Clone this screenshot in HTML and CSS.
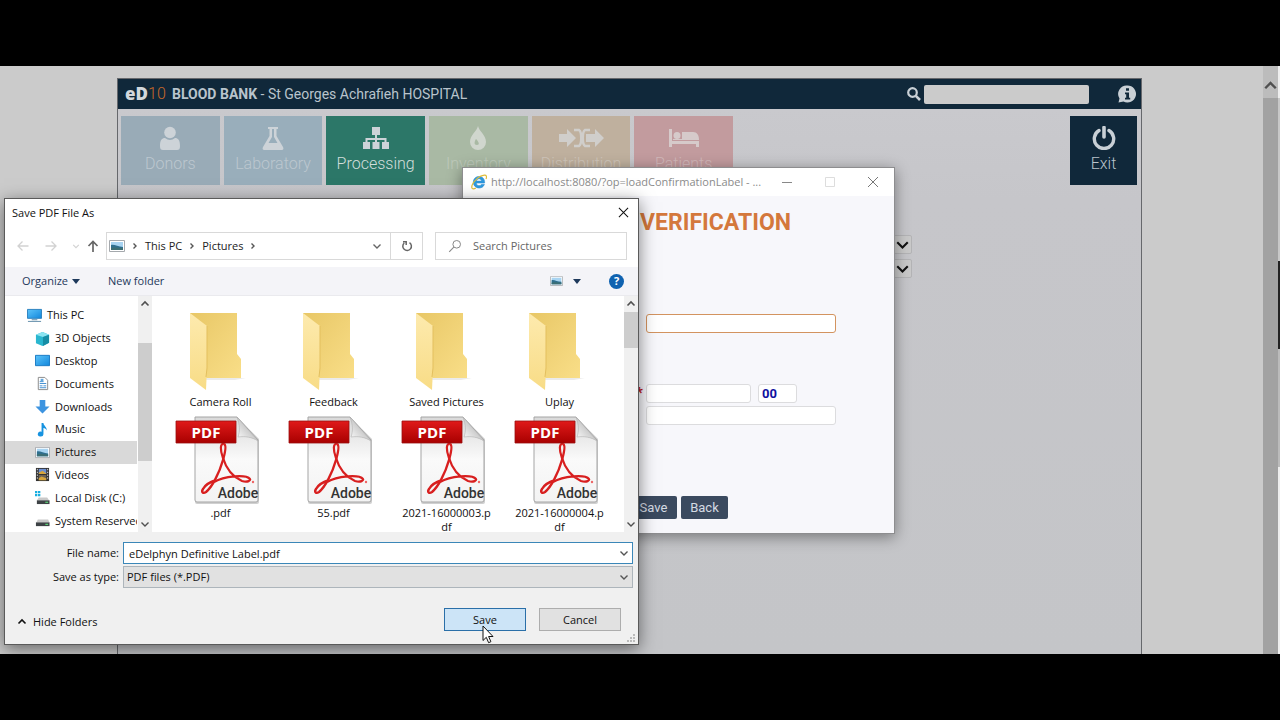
FILE: index.html
```html
<!DOCTYPE html>
<html lang="en">
<head>
<meta charset="utf-8">
<title>Blood Bank</title>
<link rel="stylesheet" href="styles.css">
</head>
<body>
<svg class="defs" aria-hidden="true">
  <defs>
    <linearGradient id="gBack" x1="0" y1="0" x2="1" y2="1"><stop offset="0" stop-color="#e8c766"/><stop offset="1" stop-color="#f9de88"/></linearGradient>
    <linearGradient id="gFlap" x1="0" y1="0" x2="0" y2="1"><stop offset="0" stop-color="#fdeaae"/><stop offset="1" stop-color="#f8dc86"/></linearGradient>
    <linearGradient id="gRed" x1="0" y1="0" x2="0" y2="1"><stop offset="0" stop-color="#e01a1a"/><stop offset="1" stop-color="#a80000"/></linearGradient>
    <linearGradient id="gPaper" x1="0" y1="0" x2="0" y2="1"><stop offset="0" stop-color="#d9d9d9"/><stop offset=".5" stop-color="#fafafa"/><stop offset="1" stop-color="#f3f3f3"/></linearGradient>
    <linearGradient id="gScreen" x1="0" y1="0" x2="1" y2="1"><stop offset="0" stop-color="#5cc4fa"/><stop offset="1" stop-color="#1287dc"/></linearGradient>
    <linearGradient id="gCurl" x1="0" y1="1" x2="1" y2="0"><stop offset="0" stop-color="#fff"/><stop offset="1" stop-color="#9a9a9a"/></linearGradient>
  </defs>
  <symbol id="folder" viewBox="0 0 60 80">
    <path d="M17 66h42l-11 2H17z" fill="#000" opacity=".08"/>
    <path d="M3 1h47v41l4 5v19H3z" fill="url(#gBack)"/>
    <path d="M3 1l17 13v42l-1 22L3 66z" fill="url(#gFlap)"/>
    <path d="M20 14v42l-1 9" fill="none" stroke="#e3bf5e"/>
  </symbol>
  <symbol id="pdf" viewBox="0 0 86 90">
    <path d="M20 2h43l21 21v63a2 2 0 0 1-2 2H22a2 2 0 0 1-2-2z" fill="#777" opacity=".35"/>
    <path d="M20 1h42l21 23v60a2 2 0 0 1-2 2H22a2 2 0 0 1-2-2z" fill="url(#gPaper)" stroke="#a5a5a5"/>
    <path d="M62 1c3 8 3 14 1 20 7-1 14 0 20 4z" fill="url(#gCurl)" stroke="#b0b0b0" stroke-width=".6"/>
    <path d="M49 28c-4-1-4 6-1 14 3 10 10 19 19 23 6 2 9-1 8-2-4-5-26-3-36 3" fill="none" stroke="#d81f1f" stroke-width="2.200"/>
    <path d="M49 28c3 1 1 9-1 16-4 14-11 27-17 32-3 2-5 0-3-3 2-4 7-7 13-9" fill="none" stroke="#d81f1f" stroke-width="2.400"/>
    <circle cx="78" cy="66" r="1.200" fill="#e66"/>
    <path d="M1 5h60v22H1z" fill="url(#gRed)" stroke="#9b0f0f" stroke-width=".8"/>
    <text x="31" y="22" text-anchor="middle" class="pdf-tag">PDF</text>
    <text x="63" y="82" text-anchor="middle" class="pdf-brand">Adobe</text>
  </symbol>
  <symbol id="picture" viewBox="0 0 16 12">
    <path d="M.5.5h15v11H.5z" fill="#fff" stroke="#a5a9ad"/>
    <path d="M2 2h12v8H2z" fill="#a8d4f2"/>
    <path d="M2 5c3-1 7 2 12 2v3H2z" fill="#2f6f8e"/>
    <path d="M2 8c4-1 7 0 12 0v2H2z" fill="#3c6e74"/>
  </symbol>
  <symbol id="up" viewBox="0 0 10 10"><path d="M1.500 6.500L5 3l3.500 3.500" fill="none" stroke="currentColor" stroke-width="1.600"/></symbol>
  <symbol id="down" viewBox="0 0 10 10"><path d="M1.500 3.500L5 7l3.500-3.500" fill="none" stroke="currentColor" stroke-width="1.400"/></symbol>
  <symbol id="right" viewBox="0 0 10 10"><path d="M3.500 2.500L6 5 3.500 7.500" fill="none" stroke="currentColor" stroke-width="1.400"/></symbol>
  <symbol id="drive" viewBox="0 0 16 14"><path d="M3 6h11l1.500 3H1.500z" fill="#c9c9c9"/><path d="M1 9h14.500v4H1z" fill="#3d4245"/><path d="M11 10.500h3v1.200h-3z" fill="#5edc7a"/></symbol>
</svg>

<main class="stage">
  <div class="page">
    <div class="app">
      <header class="topbar">
        <span class="logo"><b>eD</b><i>10</i></span>
        <h1 class="title"><b>BLOOD BANK</b> - St Georges Achrafieh HOSPITAL</h1>
        <svg class="ic14" viewBox="0 0 14 14"><circle cx="5.500" cy="5.500" r="4.300" fill="none" stroke="#c9d0d6" stroke-width="2.200"/><path d="M8.800 8.800L13 13" stroke="#c9d0d6" stroke-width="2.600"/></svg>
        <input class="quick" type="text" aria-label="Search">
        <button class="info" aria-label="Information"><svg viewBox="0 0 18 18"><path d="M9.500.5a8.500 8.500 0 1 1-4 16L.5 17.500l1-4A8.500 8.500 0 0 1 9.500.5z" fill="#c9d0d6"/><path d="M8 3.200h3v2.600H8zM7 7.500h4v5.300h1.200v1.700H7v-1.700h1.200V9.200H7z" fill="#10283a"/></svg></button>
      </header>
      <div class="menu">
        <nav class="tiles">
          <a class="tile donors" href="#"><svg viewBox="0 0 32 24"><circle cx="16" cy="6.500" r="5.800"/><path d="M6 20c0-6 2-8 5-8a8 8 0 0 0 10 0c3 0 5 2 5 8 0 3-1 4-3 4H9c-2 0-3-1-3-4z"/></svg>Donors</a>
          <a class="tile lab" href="#"><svg viewBox="0 0 32 24"><path fill-rule="evenodd" d="M11 1h10v2h-1.500v7L26 21c1 2 0 3-1 3H7c-1 0-2-1-1-3l6.500-11V3H11zm4 2v8l-3.500 6h9L17 11V3z"/></svg>Laboratory</a>
          <a class="tile processing" href="#"><svg viewBox="0 0 32 24"><path d="M12 1h8v8h-3v3h9.500v4H29v7h-7v-7h2.500v-2H17v2h2.500v7h-7v-7H15v-2H7.500v2H10v7H3v-7h2.500v-4H15V9h-3z"/></svg>Processing</a>
          <a class="tile inventory" href="#"><svg viewBox="0 0 32 24"><path fill-rule="evenodd" d="M16 0c1 5 8 9 8 16a8 8 0 0 1-16 0c0-7 7-11 8-16zm-2 13c-2 3-2 6 1 6s2-3-1-6z"/></svg>Inventory</a>
          <a class="tile distribution" href="#"><svg class="wide" viewBox="0 0 46 24"><path d="M1 8h8V3l9 9-9 9v-5H1zM28 8h9V3l9 9-9 9v-5h-9z"/><path d="M16 4h5c3 2 3 14 0 16h-5M32 4h-5c-3 2-3 14 0 16h5" fill="none" stroke="#d0cecb" stroke-width="2.500"/></svg>Distribution</a>
          <a class="tile patients" href="#"><svg viewBox="0 0 32 24"><path d="M1 3h3v12h27v6h-3v-3H4v3H1z"/><circle cx="9" cy="9.500" r="3.500"/><path d="M14 6h11c4 0 6 3 6 8H5v-1h9z"/></svg>Patients</a>
        </nav>
        <a class="tile exit" href="#"><svg viewBox="0 0 32 24"><path d="M11 4.500a9.700 9.700 0 1 0 10 0" fill="none" stroke="#c9d0d6" stroke-width="3.400" stroke-linecap="round"/><path d="M16 1.500v9.500" stroke="#c9d0d6" stroke-width="3.600" stroke-linecap="round"/></svg>Exit</a>
      </div>
      <div class="filters">
        <label class="filter"><select aria-label="Filter one"><option></option></select><svg viewBox="0 0 10 10"><use href="#down"/></svg></label>
        <label class="filter"><select aria-label="Filter two"><option></option></select><svg viewBox="0 0 10 10"><use href="#down"/></svg></label>
      </div>
    </div>
  </div>
  <div class="page-scroll"><svg viewBox="0 0 10 10"><use href="#up"/></svg><div class="thumb"></div></div>
  <div class="edge"><i class="e1"></i><i class="e2"></i><i class="e3"></i><i class="e4"></i></div>

  <section class="popup">
    <header class="popup-bar">
      <svg class="ie" viewBox="0 0 16 16"><path d="M8 2.500c-3.500 0-5.700 2.600-5.700 5.700S4.600 14 8 14c2.600 0 4.600-1.400 5.400-3.600h-3c-.5.900-1.300 1.300-2.400 1.300-1.600 0-2.600-1-2.700-2.700h8.300c.2-4-2-6.500-5.600-6.500zM5.400 7.100C5.600 5.700 6.600 4.800 8 4.800s2.400.9 2.500 2.300z" fill="#2d9be0" stroke="#2d8bd0" stroke-width=".6"/><path d="M15 5c1-2 .6-4-1.600-3.800C8 1.600.3 9 .8 13.500c.3 2 2.500 1.500 4 .5" fill="none" stroke="#e0bd3a" stroke-width="1.200"/></svg>
      <span class="popup-title">http://localhost:8080/?op=loadConfirmationLabel - ...</span>
      <button aria-label="Minimize"><svg viewBox="0 0 12 12"><path d="M1 6.500h10" stroke="#888"/></svg></button>
      <button aria-label="Maximize"><svg viewBox="0 0 12 12"><path d="M1.500 1.500h9v9h-9z" fill="none" stroke="#ddd"/></svg></button>
      <button aria-label="Close"><svg viewBox="0 0 12 12"><path d="M1 1l10 10M11 1L1 11" stroke="#777"/></svg></button>
    </header>
    <form class="popup-body">
      <h2>VERIFICATION</h2>
      <input class="f long focus" type="text" aria-label="Code">
      <div class="frow"><span class="req">*</span><input class="f num" type="text" aria-label="Number"><input class="f chk" type="text" value="00" aria-label="Check"></div>
      <input class="f long" type="text" aria-label="Product">
      <div class="acts"><button type="button">Save</button><button type="button">Back</button></div>
    </form>
  </section>

  <section class="dialog">
    <header class="dlg-bar"><h2>Save PDF File As</h2><button aria-label="Close"><svg viewBox="0 0 12 12"><path d="M1 1l10 10M11 1L1 11" stroke="#111" stroke-width="1.100"/></svg></button></header>
    <div class="nav">
      <button aria-label="Back" class="dim"><svg viewBox="0 0 14 14"><path d="M12.500 7H2M6.500 2.500L2 7l4.500 4.500" fill="none" stroke="currentColor" stroke-width="1.300"/></svg></button>
      <button aria-label="Forward" class="dim"><svg viewBox="0 0 14 14"><path d="M1.500 7H12M7.500 2.500L12 7l-4.500 4.500" fill="none" stroke="currentColor" stroke-width="1.300"/></svg></button>
      <button aria-label="Recent" class="dim small"><svg viewBox="0 0 10 10"><use href="#down"/></svg></button>
      <button aria-label="Up" class="upb"><svg viewBox="0 0 14 14"><path d="M7 13V2.500M2.500 7L7 2.500 11.500 7" fill="none" stroke="currentColor" stroke-width="1.700"/></svg></button>
      <div class="path">
        <svg class="pic"><use href="#picture"/></svg>
        <svg class="chev"><use href="#right"/></svg><span>This PC</span>
        <svg class="chev"><use href="#right"/></svg><span>Pictures</span>
        <svg class="chev"><use href="#right"/></svg>
        <svg class="chev drop" viewBox="0 0 10 10"><use href="#down"/></svg>
      </div>
      <button class="refresh" aria-label="Refresh"><svg viewBox="0 0 12 12"><path d="M8.500 2.600A4.300 4.300 0 1 1 3.200 3M2 1.800h3.200V5" fill="none" stroke="#666" stroke-width="1.500"/></svg></button>
      <label class="search"><svg viewBox="0 0 14 14"><circle cx="8.700" cy="5.300" r="3.800" fill="none" stroke="#888"/><path d="M5.800 8.200L1.200 12.800" stroke="#888" stroke-width="1.100"/></svg><input type="text" placeholder="Search Pictures" aria-label="Search Pictures"></label>
    </div>
    <div class="tools">
      <button>Organize <svg class="tri" viewBox="0 0 8 5"><path d="M0 0h8L4 5z" fill="#1e395b"/></svg></button>
      <button class="newf">New folder</button>
      <span class="grow"></span>
      <button aria-label="View"><svg class="view" viewBox="0 0 16 12"><use href="#picture"/></svg></button>
      <button aria-label="View options" class="vopt"><svg class="tri" viewBox="0 0 8 5"><path d="M0 0h8L4 5z" fill="#1e395b"/></svg></button>
      <button class="help" aria-label="Help">?</button>
    </div>
    <div class="panes">
      <ul class="tree">
        <li class="root"><svg viewBox="0 0 16 14"><path d="M.5.500h15v9.500H.5z" fill="url(#gScreen)" stroke="#2a7fbd"/><path d="M5 11.500h6M1 13.300h14" stroke="#5d8aa8"/></svg>This PC</li>
        <li><svg viewBox="0 0 16 16"><path d="M1 4l7-3 7 3v8.500L8 16l-7-3z" fill="#29b6cf"/><path d="M1 4l7-3 7 3-6.500 2.500z" fill="#8be4f1"/><path d="M8.500 6.500L15 4v8.500L8.500 16z" fill="#168da5"/></svg>3D Objects</li>
        <li><svg viewBox="0 0 16 14"><path d="M.5 1.500h15v11H.5z" fill="url(#gScreen)" stroke="#1578c2"/></svg>Desktop</li>
        <li><svg viewBox="0 0 16 16"><path d="M3.500 1.500h7l3 3v10h-10z" fill="#fff" stroke="#888"/><path d="M5 6h4M5 8h7M5 10.500h3M9 10.500h3M5 12.500h7" stroke="#3d8cd0"/><path d="M6 3h3v3H6z" fill="#63a7de"/></svg>Documents</li>
        <li><svg viewBox="0 0 16 16"><path d="M5 1h6v7h4.500L8 15.500.5 8H5z" fill="#3d94e0"/></svg>Downloads</li>
        <li><svg viewBox="0 0 16 16"><path d="M7 1h2c0 3 4 4 3.500 8-.5-1.500-2-2.500-3.500-2.500V13a3 2.600 0 1 1-2-2.500z" fill="#1793e0"/></svg>Music</li>
        <li class="sel"><svg viewBox="0 0 16 12"><use href="#picture"/></svg>Pictures</li>
        <li><svg viewBox="0 0 16 16"><path d="M1 1h14v14H1z" fill="#333"/><path d="M4 2h8v5.500H4z" fill="#6c8fd0"/><path d="M4 8.500h8V14H4z" fill="#6d6352"/><path d="M4 6l4-2 4 3v.5H4zM4 12l3-2 5 2v2H4z" fill="#d6a43b"/><path d="M2.500 2v12M13.500 2v12" stroke="#ddd" stroke-dasharray="1.500 1.500"/></svg>Videos</li>
        <li><svg viewBox="0 0 16 16"><path d="M0 1h2.500v2.500H0zM3.200 1h2.500v2.500H3.200zM0 4.200h2.500v2.500H0zM3.200 4.200h2.500v2.500H3.200z" fill="#18aee0"/><path d="M4 8h9l2 3H2z" fill="#c9c9c9"/><path d="M2 11h13.500v4H2z" fill="#3d4245"/><path d="M11 12.500h3v1.200h-3z" fill="#5edc7a"/></svg>Local Disk (C:)</li>
        <li><svg viewBox="0 0 16 14"><use href="#drive"/></svg>System Reserved</li>
      </ul>
      <div class="bar tree-bar"><svg viewBox="0 0 10 10"><use href="#up"/></svg><i></i><svg viewBox="0 0 10 10"><use href="#down"/></svg></div>
      <div class="files">
        <figure><svg class="fo"><use href="#folder"/></svg><figcaption>Camera Roll</figcaption></figure>
        <figure><svg class="fo"><use href="#folder"/></svg><figcaption>Feedback</figcaption></figure>
        <figure><svg class="fo"><use href="#folder"/></svg><figcaption>Saved Pictures</figcaption></figure>
        <figure><svg class="fo"><use href="#folder"/></svg><figcaption>Uplay</figcaption></figure>
        <figure><svg class="pf"><use href="#pdf"/></svg><figcaption>.pdf</figcaption></figure>
        <figure><svg class="pf"><use href="#pdf"/></svg><figcaption>55.pdf</figcaption></figure>
        <figure><svg class="pf"><use href="#pdf"/></svg><figcaption>2021-16000003.p<br>df</figcaption></figure>
        <figure><svg class="pf"><use href="#pdf"/></svg><figcaption>2021-16000004.p<br>df</figcaption></figure>
      </div>
      <div class="bar file-bar"><svg viewBox="0 0 10 10"><use href="#up"/></svg><i></i><svg viewBox="0 0 10 10"><use href="#down"/></svg></div>
    </div>
    <form class="foot">
      <div class="fields">
        <label for="fname">File name:</label>
        <div class="combo"><input id="fname" type="text" value="eDelphyn Definitive Label.pdf"><svg viewBox="0 0 10 10"><use href="#down"/></svg></div>
        <label for="ftype">Save as type:</label>
        <div class="combo"><select id="ftype"><option>PDF files (*.PDF)</option></select><svg viewBox="0 0 10 10"><use href="#down"/></svg></div>
      </div>
      <div class="actions">
        <button type="button" class="hide"><svg viewBox="0 0 10 10"><use href="#up"/></svg>Hide Folders</button>
        <span class="grow"></span>
        <button type="button" class="btn primary">Save</button>
        <button type="button" class="btn">Cancel</button>
      </div>
    </form>
    <svg class="grip" viewBox="0 0 9 9"><path d="M6 0h2v2H6zM3 3h2v2H3zM6 3h2v2H6zM0 6h2v2H0zM3 6h2v2H3zM6 6h2v2H6z" fill="#bbb"/></svg>
  </section>

  <svg class="cursor" viewBox="0 0 12 19"><path d="M1 1v14.500l3.300-3.200 2.300 5.400 2.300-1-2.300-5.200H11z" fill="#fff" stroke="#111"/></svg>
</main>
</body>
</html>
```
FILE: styles.css
```css
* { box-sizing: border-box; }
html, body { height: 100%; margin: 0; }
body {
  background: #000;
  padding: 66px 0;
  font-family: "Open Sans", "Noto Sans", sans-serif;
  font-size: 11px;
  line-height: 14px;
  color: #111;
}
button, input, select { font: inherit; color: inherit; margin: 0; }
button { border: 0; padding: 0; background: none; }
h1, h2, ul, figure { margin: 0; padding: 0; }
svg { display: block; flex: none; }
.defs { position: absolute; width: 0; height: 0; }
.grow { flex: 1; }

.stage { position: relative; height: 100%; overflow: hidden; display: flex; background: #cbcbcb; }
.page { flex: 1; padding: 12px 121px 0 117px; display: flex; }
.app { flex: 1; border: 1px solid #66686c; border-bottom: 0; background: linear-gradient(#cacace, #c6c6ca 120px, #c4c5c8); }

/* Application header */
.topbar { display: flex; align-items: center; height: 30px; padding: 0 5px 0 7px; background: #10283a; color: #b9c4cc; }
.logo { display: flex; align-items: center; width: 47px; font-size: 17px; line-height: 24px; color: #d3d8dc; }
.logo b { font-weight: 800; }
.logo i { font: 300 16px/24px Roboto, sans-serif; color: #c8692a; }
.title { flex: 1; font: 400 14px/20px Roboto, sans-serif; }
.ic14 { width: 14px; height: 14px; margin-right: 3px; }
.quick { width: 165px; height: 19px; border: 0; border-radius: 2px; background: #cbcbcb; }
.info { width: 18px; height: 18px; margin-left: 29px; }
.info svg { width: 18px; height: 18px; }

.menu { display: flex; justify-content: space-between; padding: 7px 4px 0 3px; }
.tiles { display: grid; grid-template-columns: repeat(6, 1fr); gap: 4px; width: 612px; }
.tile { display: flex; flex-direction: column; align-items: center; height: 69px; padding-top: 10px; gap: 2px; font: 300 16px/24px Roboto, sans-serif; text-decoration: none; color: #bcc7cf; fill: #cdd3d8; }
.tile svg { width: 32px; height: 24px; }
.tile .wide { width: 46px; }
.donors { background: #99abb7; }
.lab { background: #99aebb; }
.processing { background: #2c7768; color: #d2dedb; }
.inventory { background: #a9b9a4; color: #bec9bb; fill: #d0d6ce; }
.distribution { background: #bfb09e; color: #cfc5ba; fill: #d0cecb; }
.patients { background: #c29b9e; color: #d2b8ba; fill: #d6caca; }
.exit { width: 67px; background: #10283a; color: #b9c4cc; }

.filters { display: flex; flex-direction: column; gap: 5px; width: 212px; margin: 50px 0 0 582px; }
.filter { display: flex; align-items: center; height: 19px; border: 1px solid #b4b4b6; border-radius: 2px; background: #c9c9c9; color: #111; }
.filter select { flex: 1; height: 17px; border: 0; appearance: none; background: none; }
.filter svg { width: 15px; height: 15px; margin-right: 1px; }

.page-scroll { width: 15px; display: flex; flex-direction: column; background: #bcbcbc; color: #505050; }
.page-scroll svg { width: 15px; height: 32px; padding: 8px 0 0; }
.page-scroll .thumb { flex: 1; background: #a2a2a2; }
.edge { width: 2px; display: flex; flex-direction: column; background: #eee; }
.e1 { height: 32px; }
.e2 { height: 163px; background: #c8c8c8; }
.e3 { height: 88px; background: #222; }
.e4 { height: 118px; background: #bbb; }

/* Verification window */
.popup { position: absolute; left: 462px; top: 101px; width: 433px; background: #f7f7fb; border: 1px solid #8d8d8f; box-shadow: 0 3px 14px rgba(0, 0, 0, .4); }
.popup-bar { display: flex; align-items: center; height: 28px; background: #fff; color: #8b8b8b; }
.popup-title { flex: 1; }
.popup-bar button { width: 43px; height: 28px; display: grid; place-items: center; }
.popup-bar svg { width: 12px; height: 12px; }
.popup-bar .ie { width: 16px; height: 16px; margin: 0 4px 0 8px; }
.popup-body { padding: 13px 0 0 183px; font-family: Roboto, sans-serif; height: 337px; display: flex; flex-direction: column; align-items: flex-start; }
.popup-body h2 { font: 700 23px/28px Roboto, sans-serif; color: #d4783c; margin-left: -6px; }
.f { height: 19px; border: 1px solid #dcdcde; border-radius: 3px; background: #fff; padding: 0 3px; font: 700 13px/17px Roboto, sans-serif; color: #1010a0; }
.long { width: 190px; }
.focus { border-color: #d3935f; margin: 77px 0 51px; }
.frow { display: flex; margin: 0 0 3px -10px; }
.req { width: 10px; font: 700 15px/19px Roboto, sans-serif; color: #c01818; }
.num { width: 105px; }
.chk { width: 39px; margin-left: 7px; }
.acts { display: flex; gap: 4px; margin: 71px 0 0 -16px; }
.acts button { width: 47px; height: 23px; border-radius: 2px; background: #3b4a5f; color: #d5dbe3; font: 400 13px/23px Roboto, sans-serif; }

/* Save dialog */
.dialog { position: absolute; left: 4px; top: 132px; width: 635px; background: #fff; border: 1px solid #5a5a5a; box-shadow: 0 4px 16px rgba(0, 0, 0, .5); }
.dlg-bar { display: flex; justify-content: space-between; height: 33px; padding: 0 9px 0 7px; }
.dlg-bar h2 { font-size: 11px; font-weight: 400; line-height: 27px; }
.dlg-bar button, .dlg-bar svg { width: 11px; height: 27px; }
.nav { display: flex; align-items: center; height: 28px; padding: 0 11px; }
.nav button { display: grid; place-items: center; width: 28px; height: 28px; padding-right: 14px; }
.nav button svg { width: 14px; height: 14px; }
.nav .dim { color: #d2d2d2; }
.nav .small { width: 14px; padding-right: 8px; }
.nav .small svg { width: 8px; height: 8px; }
.nav .upb { width: 14px; padding: 0; color: #666; }
.path { display: flex; align-items: center; flex: 1; height: 28px; margin-left: 6px; border: 1px solid #d9d9d9; padding: 0 8px 0 2px; color: #222; }
.pic { width: 16px; height: 12px; }
.chev { width: 10px; height: 10px; margin: 0 5px; color: #555; }
.path .drop { margin: 0 0 0 auto; color: #666; }
.nav .refresh { width: 32px; padding: 0; border: 1px solid #d9d9d9; border-left: 0; }
.nav .refresh svg { width: 12px; height: 12px; }
.search { display: flex; align-items: center; gap: 11px; width: 192px; height: 28px; margin-left: 12px; padding-left: 12px; border: 1px solid #d9d9d9; }
.search svg { width: 14px; height: 14px; }
.search input { flex: 1; min-width: 0; border: 0; padding: 0; }
.search input::placeholder { color: #666; opacity: 1; }

.tools { display: flex; align-items: center; height: 29px; margin-top: 7px; padding: 0 14px 0 17px; background: #f4f4f8; color: #1e395b; border-bottom: 1px solid #eaeaee; }
.tools button { display: flex; align-items: center; gap: 4px; }
.tools .newf { margin-left: 28px; }
.tri { width: 8px; height: 5px; }
.view { width: 13px; height: 10px; }
.tools .vopt { margin: 0 28px 0 10px; }
.tools .help { justify-content: center; width: 15px; height: 15px; border-radius: 50%; background: #0f62b0; color: #fff; font-weight: 700; }

.panes { display: flex; height: 236px; overflow: hidden; }
.tree { display: flex; flex-direction: column; width: 132px; padding-top: 8px; list-style: none; }
.tree li { display: flex; flex: 1; align-items: center; gap: 5px; padding-left: 30px; white-space: nowrap; overflow: hidden; }
.tree .root { padding-left: 22px; }
.tree .sel { background: #d9d9d9; }
.tree svg { width: 15px; height: 15px; }
.bar { display: flex; flex-direction: column; align-items: center; width: 14px; background: #f0f0f0; color: #505050; }
.bar svg { width: 10px; height: 16px; }
.bar i { width: 14px; background: #cdcdcd; }
.tree-bar { margin-left: 1px; }
.tree-bar i { height: 118px; margin: auto 0 55px; }
.file-bar i { height: 36px; margin-bottom: auto; }
.files { flex: 1; display: grid; grid-template-columns: repeat(4, 113px); grid-template-rows: 104px 124px; padding: 16px 0 0 12px; }
.files figure { display: flex; flex-direction: column; align-items: center; }
.fo { width: 60px; height: 80px; margin-right: 8px; }
.fo + figcaption { margin-top: 3px; }
.pf { width: 86px; height: 90px; margin-right: 6px; }
.files figcaption { text-align: center; }
.pdf-tag { font: 700 15px "Open Sans", sans-serif; fill: #fff; }
.pdf-brand { font: 500 14px Roboto, sans-serif; fill: #333; }

.foot { background: #f0f0f0; height: 112px; padding: 10px 5px 13px; display: flex; flex-direction: column; justify-content: space-between; }
.fields { display: grid; grid-template-columns: 109px 1fr; gap: 2px 4px; align-items: center; text-align: right; }
.combo { display: flex; align-items: center; height: 22px; border: 1px solid #3b87b8; background: #fff; }
.combo input, .combo select { flex: 1; height: 18px; border: 0; padding: 0 5px; background: none; outline: 0; appearance: none; }
.combo svg { width: 10px; height: 10px; margin-right: 3px; color: #555; }
.combo:has(select) { border-color: #adb5bb; background: #e1e1e1; }
.combo select { padding: 0 3px; }
.actions { display: flex; align-items: center; padding: 0 12px 0 7px; }
.hide { display: flex; align-items: center; gap: 6px; margin-top: 5px; }
.hide svg { width: 10px; height: 10px; }
.btn { width: 82px; height: 23px; border: 1px solid #adadad; background: #e1e1e1; margin-left: 13px; }
.primary { border-color: #2a6fa8; background: #cce4f7; }
.grip { position: absolute; right: 2px; bottom: 1px; width: 9px; height: 9px; }
.cursor { position: absolute; left: 482px; top: 559px; width: 12px; height: 19px; }
```
